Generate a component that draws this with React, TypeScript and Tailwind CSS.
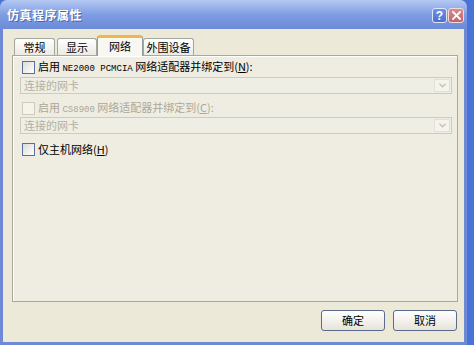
import React from 'react';

function Checkbox({ disabled }: { disabled?: boolean }) {
  return (
    <span
      className={
        disabled
          ? 'w-[13px] h-[13px] border border-[#cdcbbe] bg-[#f4f3ec] shrink-0'
          : 'w-[13px] h-[13px] border border-[#55709a] bg-gradient-to-br from-[#dedcd6] to-white shrink-0'
      }
    />
  );
}

function Select({ text }: { text: string }) {
  return (
    <div className="h-[17px] mr-[5px] border border-[#cdcbbe] bg-[#efeee4] flex items-center">
      <span className="pl-[3px] text-[#b3b0a2] text-[11px] leading-none">{text}</span>
      <span className="ml-auto mr-px w-[16px] h-[13px] border border-[#e2e0d4] bg-[#f4f3ec] flex items-center justify-center">
        <svg width="7" height="5" viewBox="0 0 7 5" fill="none" stroke="#c3c0b3" strokeWidth="1.3">
          <path d="M0.5 0.8 3.5 3.8 6.5 0.8" />
        </svg>
      </span>
    </div>
  );
}

const tabs = [
  { label: '常规', w: 'w-[41px]' },
  { label: '显示', w: 'w-[40px] ml-[2px]' },
  { label: '网络', w: 'w-[46px]', active: true },
  { label: '外围设备', w: 'w-[51px]' },
];

// SimSun-like narrow latin run
const mono = "font-['Liberation_Mono',monospace] text-[9px]";

export default function App() {
  return (
    <div className="w-[474px] h-[345px] flex bg-[#4a73d6] font-['SimSun','Noto_Sans_CJK_SC',sans-serif] text-[11px] text-black overflow-hidden">
      <div className="w-[467px] h-full flex flex-col rounded-t-[7px] bg-[#6e8ad6] overflow-hidden">
        {/* title bar */}
        <div className="h-[29px] shrink-0 flex items-center pl-[7px] pr-[3px] bg-gradient-to-b from-[#b4c8f2] via-[#7f9de2] to-[#6c8bd8]">
          <span className="text-white font-bold text-[12px] tracking-[0.5px] [text-shadow:1px_1px_0_#4a64a8]">仿真程序属性</span>
          <div className="ml-auto flex gap-[1px] mt-[2px]">
            <span className="w-[15px] h-[15px] rounded-[3px] border border-[#dfe7f8] bg-gradient-to-b from-[#6f92e6] to-[#4a6fd0] flex items-center justify-center text-white font-bold text-[12px] leading-none font-['Liberation_Sans',sans-serif]">
              ?
            </span>
            <span className="w-[16px] h-[15px] rounded-[3px] border border-[#f0dada] bg-gradient-to-b from-[#d98c8c] to-[#c2646a] flex items-center justify-center">
              <svg width="9" height="9" viewBox="0 0 9 9" stroke="white" strokeWidth="1.8" strokeLinecap="square">
                <path d="M1 1 8 8M8 1 1 8" />
              </svg>
            </span>
          </div>
        </div>

        {/* body */}
        <div className="flex-1 mx-[3px] mb-[3px] bg-[#ece9d8] flex flex-col pt-[6px] pl-[9px] pr-[6px]">
          <div className="h-[21px] flex items-end pl-[2px] relative z-10">
            {tabs.map((t) =>
              t.active ? (
                <div
                  key={t.label}
                  className={`${t.w} h-[21px] border-x border-[#919b9c] border-t-[3px] border-t-[#f2b54c] rounded-t-[3px] bg-[#f8f7f1] flex justify-center pt-[1px] leading-[14px]`}
                >
                  {t.label}
                </div>
              ) : (
                <div
                  key={t.label}
                  className={`${t.w} h-[17px] mb-px border border-b-0 border-[#a3a89f] rounded-t-[3px] bg-gradient-to-b from-white to-[#ebeae3] flex items-center justify-center leading-none`}
                >
                  {t.label}
                </div>
              )
            )}
          </div>

          <div className="-mt-px h-[247px] border border-[#a8a89c] shadow-[inset_1px_1px_0_#ffffff] bg-[#efede2] flex flex-col pl-[7px] pt-[4px]">
            <label className="h-[14px] flex items-center gap-[3px] pl-[2px]">
              <Checkbox />
              <span className="leading-none">
                启用 <span className={mono}>NE2000 PCMCIA</span> 网络适配器并绑定到(<u>N</u>):
              </span>
            </label>
            <div className="mt-[3px]">
              <Select text="连接的网卡" />
            </div>
            <label className="mt-[7px] h-[14px] flex items-center gap-[3px] pl-[2px] text-[#aca899]">
              <Checkbox disabled />
              <span className="leading-none">
                启用 <span className={mono}>CS8900</span> 网络适配器并绑定到(<u>C</u>):
              </span>
            </label>
            <div className="mt-[2px]">
              <Select text="连接的网卡" />
            </div>
            <label className="mt-[8px] h-[14px] flex items-center gap-[3px] pl-[2px]">
              <Checkbox />
              <span className="leading-none">
                仅主机网络(<u>H</u>)
              </span>
            </label>
          </div>

          <div className="mt-[8px] flex justify-end gap-[8px] pr-px">
            <button className="w-[64px] h-[21px] rounded-[3px] border border-[#5a6b8c] bg-gradient-to-b from-white to-[#e6e4da] leading-none">
              确定
            </button>
            <button className="w-[64px] h-[21px] rounded-[3px] border border-[#5a6b8c] bg-gradient-to-b from-white to-[#e6e4da] leading-none">
              取消
            </button>
          </div>
        </div>
      </div>
    </div>
  );
}
